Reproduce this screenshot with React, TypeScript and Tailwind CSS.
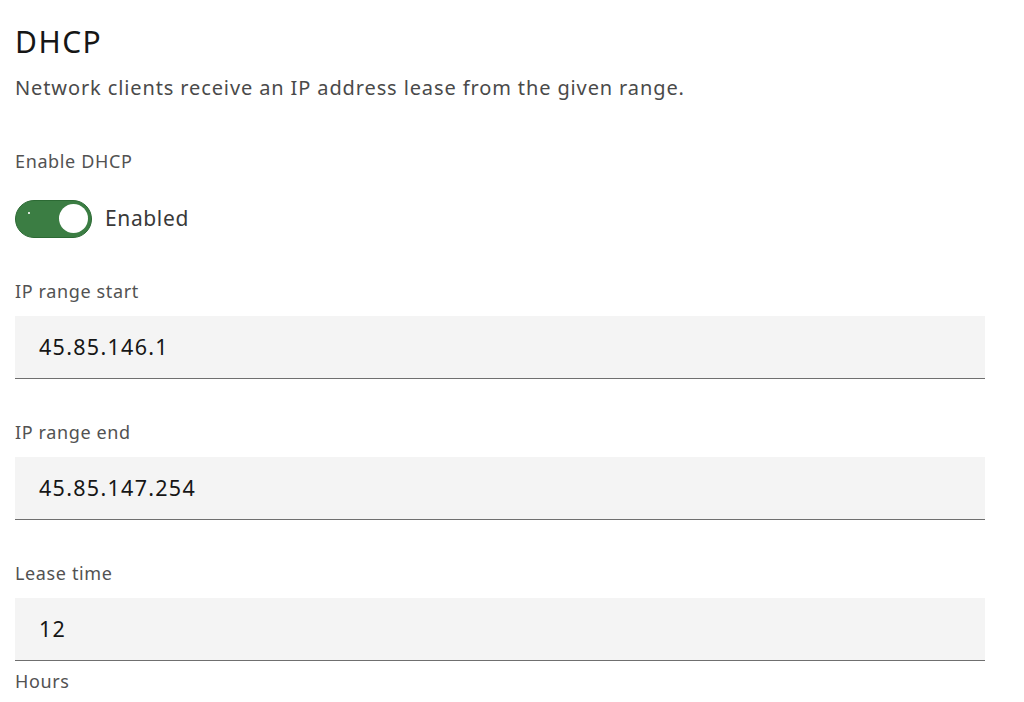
import React, { useState } from 'react';

const font = { fontFamily: '"Noto Sans", "Open Sans", sans-serif' };

type FieldProps = {
  label: string;
  value: string;
  helper?: string;
};

const TextField: React.FC<FieldProps> = ({ label, value, helper }) => {
  return (
    <div className="mt-[41px]">
      <label className="block text-[18px] leading-[24px] tracking-[0.035em] text-[#525252]">{label}</label>
      <div className="mt-[13px] h-[63px] w-[970px] bg-[#f4f4f4] border-b-[1.5px] border-[#6f6f6f] flex items-center pl-[24px]">
        <span className="text-[21.5px] tracking-[0.06em] text-[#161616]">{value}</span>
      </div>
      {helper && (
        <div className="mt-[8px] text-[18px] leading-[24px] tracking-[0.035em] text-[#525252]">{helper}</div>
      )}
    </div>
  );
};

const App: React.FC = () => {
  const [enabled, setEnabled] = useState(true);

  return (
    <div className="min-h-[702px] bg-white px-[15px] pt-[22px]" style={font}>
      <h1 className="text-[30px] leading-[40px] tracking-[0.05em] text-[#161616]">DHCP</h1>
      <p className="mt-[12px] text-[20px] leading-[28px] tracking-[0.044em] text-[#4a4a4a]">
        Network clients receive an IP address lease from the given range.
      </p>

      {/* 토글 */}
      <div className="mt-[47px] text-[18px] leading-[24px] tracking-[0.035em] text-[#525252]">Enable DHCP</div>
      <div className="mt-[27px] flex items-center">
        <button
          onClick={() => setEnabled(!enabled)}
          className={`relative h-[38px] w-[77px] rounded-full border-[1.5px] ${
            enabled ? 'bg-[#3b7d43] border-[#2c6a34]' : 'bg-[#8d8d8d] border-[#8d8d8d]'
          }`}
        >
          <span className="absolute left-[12px] top-[11px] h-[1.5px] w-[2px] bg-white/80" />
          <span
            className={`absolute top-[3px] h-[29px] w-[29px] rounded-full bg-white ${
              enabled ? 'right-[3px]' : 'left-[3px]'
            }`}
          />
        </button>
        <span className="ml-[13px] text-[21px] tracking-[0.03em] text-[#393939]">{enabled ? 'Enabled' : 'Disabled'}</span>
      </div>

      <TextField label="IP range start" value="45.85.146.1" />
      <TextField label="IP range end" value="45.85.147.254" />
      <TextField label="Lease time" value="12" helper="Hours" />
    </div>
  );
};

export default App;
